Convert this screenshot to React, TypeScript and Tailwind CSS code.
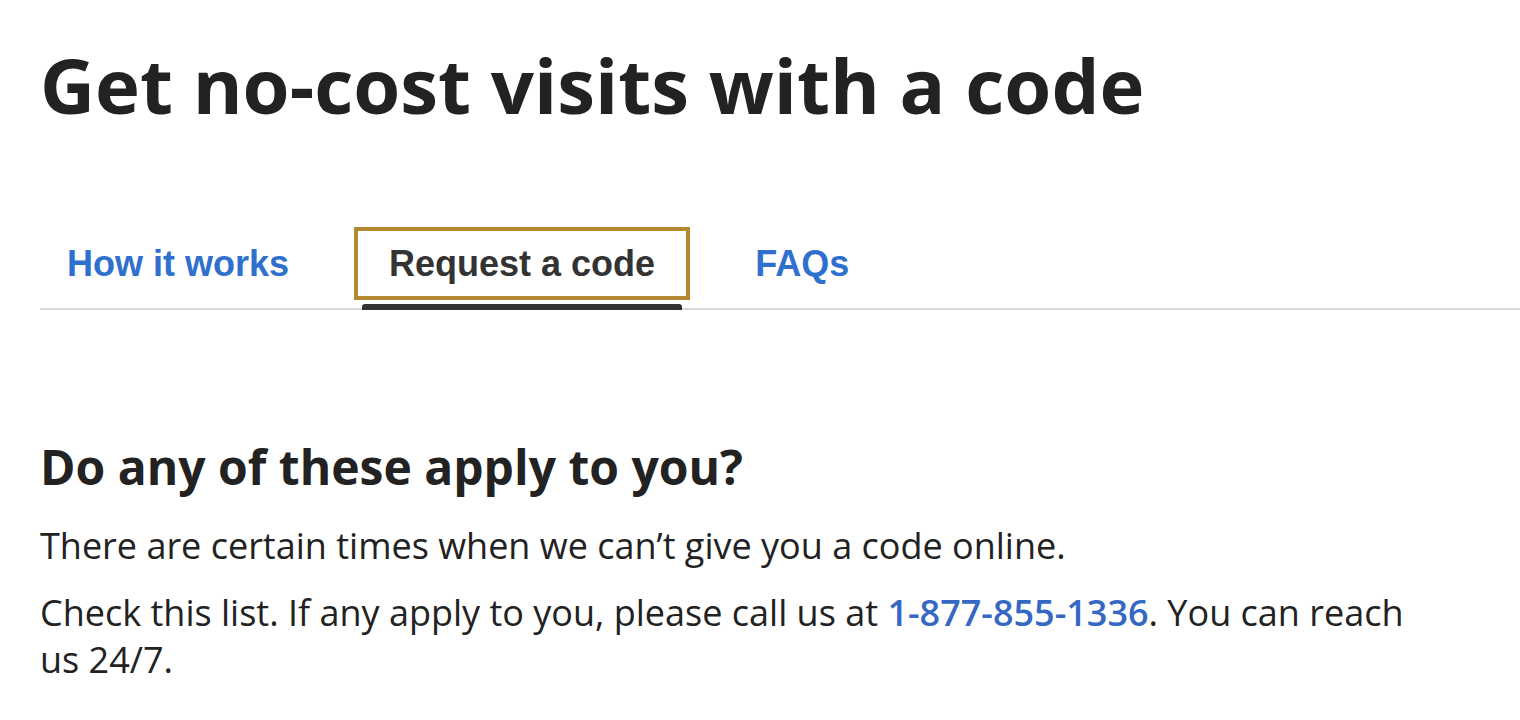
import { useState } from "react";

const tabs = ["How it works", "Request a code", "FAQs"];

export default function App() {
  const [active, setActive] = useState(1);

  return (
    <div className="min-h-screen bg-white pl-10 pr-0 pt-[30px] font-['Open_Sans','Noto_Sans',sans-serif] text-[#222222]">
      <h1 className="text-[76px] font-bold leading-[110px]">Get no-cost visits with a code</h1>

      <div className="mt-[87px] flex border-b-2 border-[#d9d9d9] font-['Liberation_Sans',Arial,sans-serif]">
        {tabs.map((tab, i) => (
          <div key={tab} className={`relative pb-2 ${i === 0 ? "-ml-2" : "ml-[30px]"}`}>
            <button
              type="button"
              onClick={() => setActive(i)}
              className={`border-4 px-[31px] pb-[14px] pt-[15px] text-[36px] font-bold leading-[36px] ${
                i === active ? "border-[#b3892f] text-[#333333]" : "border-transparent text-[#2f6fce]"
              }`}
            >
              {tab}
            </button>
            {i === active ? (
              <span className="absolute bottom-[-2px] left-2 right-2 h-[6px] rounded-t-[3px] bg-[#333333]" />
            ) : null}
          </div>
        ))}
      </div>

      <div className="mt-[128px] max-w-[1390px]">
        <h2 className="text-[48px] font-bold leading-[58px]">Do any of these apply to you?</h2>
        <p className="mt-[26px] text-[36px] leading-[48px]">
          There are certain times when we can’t give you a code online.
        </p>
        <p className="mt-[19px] text-[36px] leading-[47px]">
          Check this list. If any apply to you, please call us at{" "}
          <a href="#" className="font-semibold text-[#3568c2]">
            1-877-855-1336
          </a>
          . You can reach us 24/7.
        </p>
      </div>
    </div>
  );
}
